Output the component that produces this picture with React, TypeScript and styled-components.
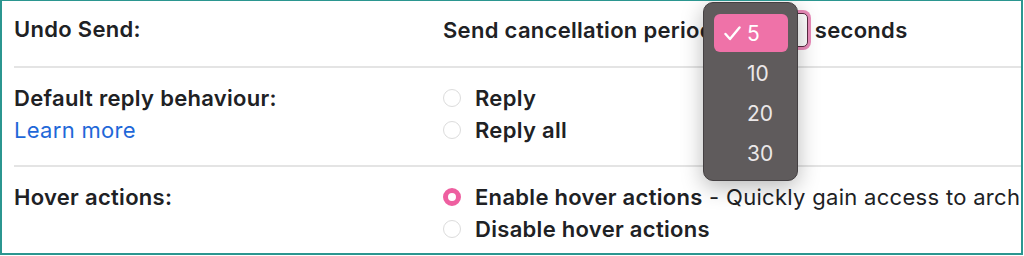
import React from "react";
import styled, { createGlobalStyle } from "styled-components";

const Global = createGlobalStyle`
  html, body { margin: 0; padding: 0; background: #ffffff; }
  body { font-family: "Inter", "Noto Sans", sans-serif; color: #202124; }
`;

const Frame = styled.div`
  position: relative;
  box-sizing: border-box;
  width: 1023px;
  height: 255px;
  border: 2px solid #2b9690;
  border-top-width: 1px;
  overflow: hidden;
  background: #fff;
`;

const Row = styled.div<{ $last?: boolean; $pt: number; $pb: number }>`
  display: grid;
  grid-template-columns: 429px 1fr;
  margin-left: 12px;
  padding-top: ${(p) => p.$pt}px;
  padding-bottom: ${(p) => p.$pb}px;
  border-bottom: ${(p) => (p.$last ? "none" : "2px solid #e4e4e4")};
  font-size: 22px;
  line-height: 32px;
  letter-spacing: 0.3px;
`;

const LabelCell = styled.div`
  display: flex;
  flex-direction: column;
`;

const Label = styled.span`
  font-weight: 600;
  white-space: nowrap;
`;

const Link = styled.a`
  color: #1f68d8;
  text-decoration: none;
  font-weight: 400;
`;

const ValueCell = styled.div`
  display: flex;
  flex-direction: column;
  white-space: nowrap;
`;

const Inline = styled.div`
  display: flex;
  align-items: center;
  font-weight: 600;
`;

const SelectBox = styled.span`
  display: inline-block;
  box-sizing: border-box;
  width: 88px;
  height: 34px;
  margin: 0 7px 0 6px;
  border: 1.5px solid #5a2a42;
  border-radius: 5px;
  box-shadow: 0 0 0 3px #ea8cba;
  background: #fff;
`;

const Option = styled.label`
  display: flex;
  align-items: center;
  gap: 14px;
`;

const Radio = styled.span<{ $on?: boolean }>`
  box-sizing: border-box;
  width: 18px;
  height: 18px;
  border-radius: 50%;
  flex: none;
  background: #fff;
  border: ${(p) => (p.$on ? "5px solid #ee5fa0" : "1.5px solid #dcdcdc")};
`;

const Strong = styled.span`
  font-weight: 600;
`;

const Plain = styled.span`
  font-weight: 400;
`;

const Popup = styled.div`
  position: absolute;
  left: 701px;
  top: 1px;
  box-sizing: border-box;
  width: 95px;
  height: 179px;
  background: #5f5b5c;
  border: 1px solid #444042;
  border-radius: 10px;
  box-shadow: 0 6px 22px rgba(0, 0, 0, 0.28);
  padding: 11px 9px 0 10px;
  display: flex;
  flex-direction: column;
  gap: 2px;
`;

const Item = styled.div<{ $sel?: boolean }>`
  height: 38px;
  border-radius: 6px;
  display: flex;
  align-items: center;
  font-family: "Inter", sans-serif;
  font-size: 21px;
  font-weight: 400;
  color: #ebe8e9;
  background: ${(p) => (p.$sel ? "#ef72a8" : "transparent")};
  ${(p) => (p.$sel ? "color: #fff;" : "")}
`;

const Check = styled.span`
  width: 33px;
  display: flex;
  justify-content: flex-end;
  padding-right: 6px;
  box-sizing: border-box;
`;

const options = ["5", "10", "20", "30"];

export default function App() {
  return (
    <>
      <Global />
      <Frame>
        <Row $pt={12} $pb={19}>
          <LabelCell>
            <Label>Undo Send:</Label>
          </LabelCell>
          <ValueCell>
            <Inline>
              Send cancellation period
              <SelectBox />
              seconds
            </Inline>
          </ValueCell>
        </Row>
        <Row $pt={14} $pb={19}>
          <LabelCell>
            <Label>Default reply behaviour:</Label>
            <Link href="#">Learn more</Link>
          </LabelCell>
          <ValueCell>
            <Option>
              <Radio />
              <Strong>Reply</Strong>
            </Option>
            <Option>
              <Radio />
              <Strong>Reply all</Strong>
            </Option>
          </ValueCell>
        </Row>
        <Row $last $pt={14} $pb={10}>
          <LabelCell>
            <Label>Hover actions:</Label>
          </LabelCell>
          <ValueCell>
            <Option>
              <Radio $on />
              <span>
                <Strong>Enable hover actions</Strong>
                <Plain> - Quickly gain access to archive, delete, mark as read and snooze controls on hover.</Plain>
              </span>
            </Option>
            <Option>
              <Radio />
              <Strong>Disable hover actions</Strong>
            </Option>
          </ValueCell>
        </Row>
        <Popup>
          {options.map((o, i) => (
            <Item key={o} $sel={i === 0}>
              <Check>
                {i === 0 && (
                  <svg width="17" height="15" viewBox="0 0 17 15">
                    <path d="M1.5 8 L6 13 L15.5 1.5" fill="none" stroke="#fff" strokeWidth="2.4" strokeLinecap="round" strokeLinejoin="round" />
                  </svg>
                )}
              </Check>
              {o}
            </Item>
          ))}
        </Popup>
      </Frame>
    </>
  );
}
